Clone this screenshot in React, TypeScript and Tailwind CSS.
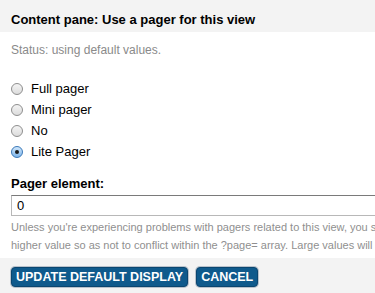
import React from "react";

function Radio({ checked, label }: { checked?: boolean; label: string }) {
  return (
    <div className="flex items-center h-[21px]">
      <span
        className={
          "w-[12px] h-[12px] rounded-full border flex items-center justify-center " +
          (checked
            ? "border-[#3a78b8] bg-gradient-to-b from-[#cfe6fb] to-[#7fb6ea]"
            : "border-[#8e8e8e] bg-gradient-to-b from-[#f4f4f4] to-[#dcdcdc]")
        }
      >
        {checked && <span className="w-[4px] h-[4px] rounded-full bg-[#1a1a1a]" />}
      </span>
      <span className="ml-[8px] text-[13px] text-black">{label}</span>
    </div>
  );
}

export default function App() {
  return (
    <div
      className="w-[375px] h-[293px] overflow-hidden bg-white flex flex-col"
      style={{ fontFamily: '"Liberation Sans", Arial, sans-serif' }}
    >
      <div className="h-[32px] bg-[#f3f3f3] flex items-end pb-[6px] px-[11px] shrink-0">
        <div className="text-[13px] font-bold text-black leading-none whitespace-nowrap">
          Content pane: Use a pager for this view
        </div>
      </div>
      <div className="px-[11px] pt-[11px] text-[12px] text-[#8a8a8a] leading-[14px]">
        Status: using default values.
      </div>
      <div className="mt-[21px] flex flex-col pl-[11px]">
        <Radio label="Full pager" />
        <Radio label="Mini pager" />
        <Radio label="No" />
        <Radio checked label="Lite Pager" />
      </div>
      <div className="px-[11px] mt-[14px] text-[13px] font-bold text-black leading-[15px]">
        Pager element:
      </div>
      <div className="pl-[11px] mt-[4px]">
        <div className="h-[21px] w-[420px] border border-[#b8b8b8] border-t-[#7a7a7a] bg-white flex items-center px-[5px] text-[13px] text-black">
          0
        </div>
      </div>
      <div className="pl-[11px] mt-[2px] text-[11px] text-[#8f8f8f] leading-[18px] whitespace-nowrap">
        <div>Unless you're experiencing problems with pagers related to this view, you should leave this at 0. If using multiple pagers on one page you may need to set this number to a</div>
        <div>higher value so as not to conflict within the ?page= array. Large values will add a lot of commas to your URLs, so avoid if possible.</div>
      </div>
      <div className="flex-1 bg-[#f3f3f3] mt-[4px] flex items-start pt-[9px] pl-[11px] gap-[8px]">
        <button className="h-[20px] px-[4px] rounded-[4px] bg-[#0f5a8c] border border-[#0a4670] shadow-[0_0_0_1px_#b9c2cc] text-white text-[12.5px] font-bold leading-none">
          UPDATE DEFAULT DISPLAY
        </button>
        <button className="h-[20px] px-[4px] rounded-[4px] bg-[#0f5a8c] border border-[#0a4670] shadow-[0_0_0_1px_#b9c2cc] text-white text-[12.5px] font-bold leading-none">
          CANCEL
        </button>
      </div>
    </div>
  );
}
